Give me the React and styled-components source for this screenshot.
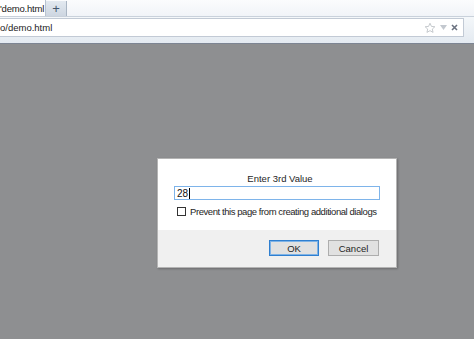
import React from 'react';
import styled, { createGlobalStyle } from 'styled-components';

const GlobalStyle = createGlobalStyle`
  * {
    margin: 0;
    padding: 0;
    box-sizing: border-box;
  }
  body {
    width: 474px;
    height: 339px;
    overflow: hidden;
    background: #8e8f91;
    font-family: 'Liberation Sans', Arial, sans-serif;
  }
`;

const Window = styled.div`
  display: flex;
  flex-direction: column;
  width: 474px;
  height: 339px;
`;

const TabStrip = styled.div`
  display: flex;
  align-items: stretch;
  height: 17px;
  background: linear-gradient(#fbfcfd, #f1f4f8);
  border-bottom: 1px solid #c9d1db;
`;

const Tab = styled.div`
  display: flex;
  align-items: center;
  width: 46px;
  font-size: 9.5px;
  letter-spacing: -0.2px;
  color: #1a1a1a;
  background: #ffffff;
  border-right: 1px solid #b9c3cf;
  white-space: nowrap;
`;

const NewTab = styled.div`
  display: flex;
  align-items: center;
  justify-content: center;
  width: 21px;
  margin-top: 1px;
  background: linear-gradient(#e3e9f0, #cdd6e1);
  border-right: 1px solid #a9b5c3;
  color: #44566c;
  font-size: 13px;
  line-height: 1;
`;

const NavBar = styled.div`
  display: flex;
  align-items: center;
  height: 27px;
  padding: 0 10px 5px 0;
  background: linear-gradient(#f4f7fa, #e4eaf1);
  border-bottom: 1px solid #7d8593;
`;

const UrlField = styled.div`
  flex: 1;
  display: flex;
  align-items: center;
  height: 19px;
  background: #ffffff;
  border: 1px solid #c2cad5;
  border-left: none;
  font-size: 9.5px;
  color: #1b1b1b;
`;

const UrlText = styled.span`
  flex: 1;
`;

const UrlIcons = styled.div`
  display: flex;
  align-items: center;
  gap: 4px;
  padding-right: 5px;
`;

const Overlay = styled.div`
  flex: 1;
  padding: 114px 0 0 157px;
`;

const Dialog = styled.div`
  width: 240px;
  height: 110px;
  display: flex;
  flex-direction: column;
  background: #ffffff;
  border: 1px solid #b4b4b4;
  box-shadow: 1px 1px 2px rgba(0, 0, 0, 0.25);
`;

const DialogBody = styled.div`
  display: flex;
  flex-direction: column;
  padding: 13px 16px 0 16px;
  height: 71px;
`;

const Prompt = styled.div`
  text-align: center;
  font-size: 9.5px;
  color: #1e1e1e;
  line-height: 13px;
  padding-left: 6px;
`;

const Input = styled.div`
  display: flex;
  align-items: center;
  height: 14px;
  margin-top: 1px;
  padding-left: 2px;
  border: 1px solid #7eb4ea;
  font-size: 10px;
  color: #111;
`;

const Caret = styled.span`
  display: inline-block;
  width: 1px;
  height: 11px;
  background: #000;
  margin-left: 1px;
`;

const CheckRow = styled.label`
  display: flex;
  align-items: center;
  gap: 4px;
  margin-top: 6px;
  padding-left: 3px;
  font-size: 9.5px;
  letter-spacing: -0.43px;
  white-space: nowrap;
  color: #1e1e1e;
`;

const Box = styled.span`
  flex: none;
  width: 9px;
  height: 9px;
  border: 1px solid #333;
  background: #fff;
`;

const Footer = styled.div`
  flex: 1;
  display: flex;
  justify-content: flex-end;
  align-items: flex-start;
  gap: 9px;
  padding: 10px 17px 0 0;
  background: #f0f0f0;
`;

const Button = styled.div`
  display: flex;
  align-items: center;
  justify-content: center;
  width: ${(p) => p.$w}px;
  height: 16px;
  font-size: 9.5px;
  color: #1e1e1e;
  background: #e1e1e1;
  border: 1px solid ${(p) => (p.$primary ? '#2f7fd0' : '#adadad')};
  box-shadow: ${(p) => (p.$primary ? 'inset 0 0 0 1px #7fb3e6' : 'none')};
`;

const App = () => (
  <>
    <GlobalStyle />
    <Window>
      <TabStrip>
        <Tab>'demo.html</Tab>
        <NewTab>+</NewTab>
      </TabStrip>
      <NavBar>
        <UrlField>
          <UrlText>o/demo.html</UrlText>
          <UrlIcons>
            <svg width="12" height="12" viewBox="0 0 24 24">
              <path
                d="M12 2.5l2.9 6.3 6.8.7-5.1 4.6 1.5 6.7L12 17.3l-6.1 3.5 1.5-6.7-5.1-4.6 6.8-.7z"
                fill="none"
                stroke="#b8bcc2"
                strokeWidth="1.6"
                strokeLinejoin="round"
              />
            </svg>
            <svg width="7" height="5" viewBox="0 0 7 5">
              <path d="M0 0h7L3.5 5z" fill="#c3c8cf" />
            </svg>
            <svg width="7" height="7" viewBox="0 0 7 7">
              <path d="M1 1l5 5M6 1L1 6" stroke="#6b7280" strokeWidth="1.6" />
            </svg>
          </UrlIcons>
        </UrlField>
      </NavBar>
      <Overlay>
        <Dialog>
          <DialogBody>
            <Prompt>Enter 3rd Value</Prompt>
            <Input>
              28<Caret />
            </Input>
            <CheckRow>
              <Box />
              Prevent this page from creating additional dialogs
            </CheckRow>
          </DialogBody>
          <Footer>
            <Button $primary $w={50}>OK</Button>
            <Button $w={51}>Cancel</Button>
          </Footer>
        </Dialog>
      </Overlay>
    </Window>
  </>
);

export default App;
